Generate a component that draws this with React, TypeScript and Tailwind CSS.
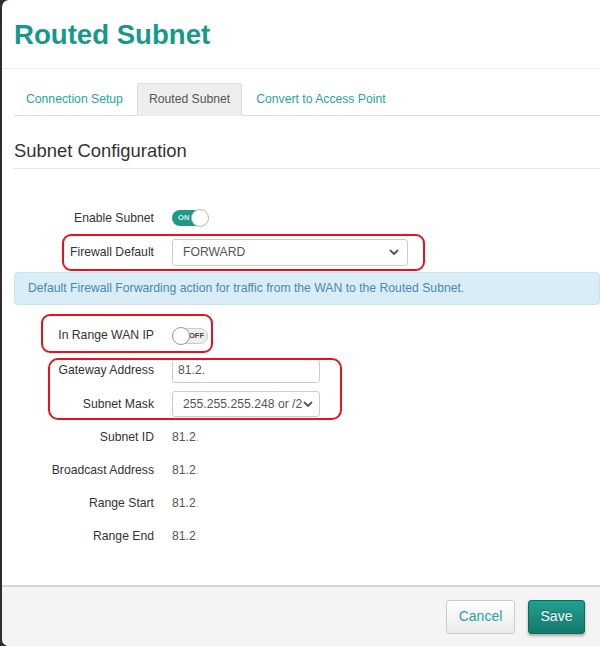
import React from "react";

const font = { fontFamily: '"Liberation Sans", Arial, sans-serif' };

function Chevron() {
  return (
    <svg width="10" height="7" viewBox="0 0 10 7" className="shrink-0">
      <path d="M1.5 1.5 L5 5 L8.5 1.5" fill="none" stroke="#555" strokeWidth="1.8" strokeLinecap="round" strokeLinejoin="round" />
    </svg>
  );
}

function ToggleOn() {
  return (
    <div className="relative w-[36px] h-[16px] rounded-full bg-[#1d9a88] flex items-center">
      <span className="ml-[6px] text-[7.5px] leading-none text-[#d8f0ec] font-bold tracking-[0.2px]">ON</span>
      <span className="absolute right-[-1px] top-[-1px] w-[18px] h-[18px] rounded-full bg-white border border-[#bbb]" />
    </div>
  );
}

function ToggleOff() {
  return (
    <div className="relative w-[36px] h-[16px] rounded-full bg-[#eee] border border-[#ccc] flex items-center justify-end">
      <span className="mr-[3px] text-[7.5px] leading-none text-[#444] font-bold">OFF</span>
      <span className="absolute left-[-1px] top-[-2px] w-[18px] h-[18px] rounded-full bg-white border border-[#999]" />
    </div>
  );
}

function Row({ label, children, className = "" }: { label: string; children: React.ReactNode; className?: string }) {
  return (
    <div className={"relative flex items-center h-[33px] " + className}>
      <div className="w-[140px] text-right text-[12.2px] text-[#333]">{label}</div>
      <div className="ml-[18px] flex items-center">{children}</div>
    </div>
  );
}

function Value({ v }: { v: string }) {
  return (
    <span className="text-[12.2px] text-[#555]">
      81.2<span className="text-[#bbb]">.</span>
    </span>
  );
}

export default function App() {
  return (
    <div className="w-[600px] h-[646px] bg-[#2e2e2e] flex" style={font}>
      <div className="ml-[2px] flex-1 bg-white rounded-l-[7px] flex flex-col overflow-hidden">
        <div className="h-[69px] border-b border-[#eee] pl-[12px] flex items-center">
          <h1 className="text-[27.6px] font-bold text-[#17998a] leading-none pt-[1px]">Routed Subnet</h1>
        </div>
        <div className="flex-1 pl-[12px]">
          <div className="mt-[14px] h-[33px] flex items-end border-b border-[#ddd] text-[12.2px]">
            <div className="h-[32px] px-[12px] flex items-center text-[#26a69a]">Connection Setup</div>
            <div className="ml-[2px] h-[33px] -mb-[1px] px-[11px] flex items-center bg-[#eee] border border-[#ddd] border-b-[#eee] rounded-t-[3px] text-[#555]">Routed Subnet</div>
            <div className="ml-[2px] h-[32px] px-[12px] flex items-center text-[#26a69a]">Convert to Access Point</div>
          </div>
          <div className="mt-[23px] pb-[6px] border-b border-[#e5e5e5] h-[30px] text-[18.4px] text-[#333] leading-[24px]">
            Subnet Configuration
          </div>
          <div className="mt-[32px]">
            <Row label="Enable Subnet" className="h-[34px]">
              <ToggleOn />
            </Row>
            <Row label="Firewall Default" className="h-[34px]">
              <div className="w-[236px] h-[27px] border border-[#ccc] rounded-[3px] flex items-center justify-between pl-[10px] pr-[8px] text-[12.2px] text-[#555]">
                <span>FORWARD</span>
                <Chevron />
              </div>
              <div className="absolute left-[48px] top-[-1px] w-[363px] h-[37px] border-2 border-[#e5141c] rounded-[9px] pointer-events-none" />
            </Row>
            <div className="mt-[3px] h-[33px] bg-[#d9edf7] border border-[#c6e5f1] rounded-[4px] flex items-center pl-[13px] text-[12.2px] text-[#4b88ae]">
              Default Firewall Forwarding action for traffic from the WAN to the Routed Subnet.
            </div>
            <Row label="In Range WAN IP" className="mt-[14px]">
              <ToggleOff />
              <div className="absolute left-[27px] top-[-5px] w-[172px] h-[39px] border-2 border-[#e5141c] rounded-[9px] pointer-events-none" />
            </Row>
            <Row label="Gateway Address" className="mt-[2px]">
              <div className="w-[148px] h-[24px] border border-[#ccc] rounded-[3px] flex items-center pl-[5px] text-[12.2px] text-[#555]">
                81.2.
              </div>
              <div className="absolute left-[34px] top-[4px] w-[294px] h-[62px] border-2 border-[#e5141c] rounded-[10px] pointer-events-none" />
            </Row>
            <Row label="Subnet Mask" className="h-[34px]">
              <div className="w-[148px] h-[26px] border border-[#ccc] rounded-[3px] flex items-center pl-[10px] pr-[6px] text-[12.2px] text-[#555]">
                <span className="w-[120px] overflow-hidden whitespace-nowrap">255.255.255.248 or /2</span>
                <span className="ml-auto"><Chevron /></span>
              </div>
            </Row>
            <Row label="Subnet ID"><Value v="81.2." /></Row>
            <Row label="Broadcast Address"><Value v="81.2." /></Row>
            <Row label="Range Start"><Value v="81.2." /></Row>
            <Row label="Range End"><Value v="81.2." /></Row>
          </div>
        </div>
        <div className="h-[61px] border-t-2 border-[#d4d4d4] bg-[#f4f4f4] flex items-center justify-end pr-[15px] gap-[13px]">
          <button className="w-[69px] h-[34px] rounded-[3px] border border-[#ccc] bg-gradient-to-b from-white to-[#eaeaea] text-[#26a69a] text-[14px]">
            Cancel
          </button>
          <button className="w-[57px] h-[34px] rounded-[3px] border border-[#0f6a5e] bg-gradient-to-b from-[#20a08f] to-[#147a6c] text-white text-[14px] shadow-[0_2px_3px_rgba(0,0,0,0.3)] [text-shadow:0_-1px_0_rgba(0,0,0,0.3)]">
            Save
          </button>
        </div>
      </div>
    </div>
  );
}
